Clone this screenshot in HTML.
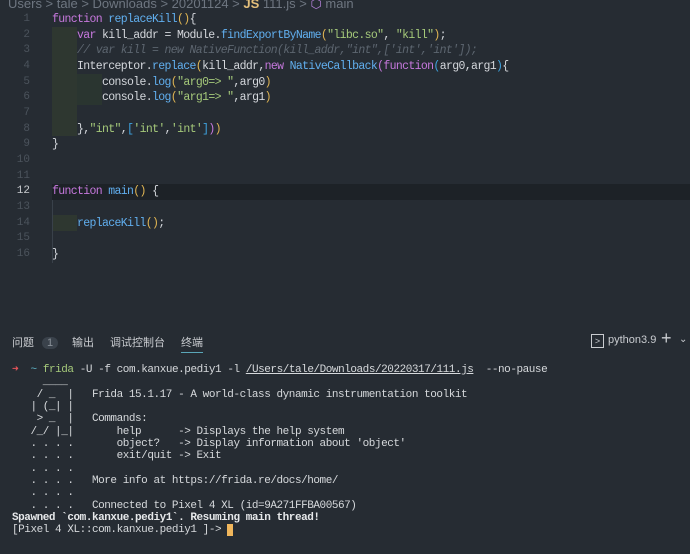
<!DOCTYPE html>
<html><head><meta charset="utf-8"><style>
body{margin:0;width:690px;height:554px;background:#262c33;overflow:hidden;position:relative;font-family:"Liberation Mono",monospace}
.bc{position:absolute;left:8px;top:-4px;font:13px "Liberation Sans",sans-serif;color:#6e7681;white-space:pre}
.ln{position:absolute;left:0;width:30px;text-align:right;font-size:11px;color:#4b535c;line-height:15.64px}
.cl{position:absolute;left:52px;font-size:11.5px;letter-spacing:-0.65px;color:#d4d7dc;white-space:pre;height:15.64px;line-height:15.64px}
.k{color:#c678dd}.f{color:#61afef}.s{color:#a5c97a}.y{color:#e0b553}.c{color:#5d6670;font-style:italic}.b{color:#3ea3e0}.p{color:#c678dd}
.g{position:absolute;background:#2e3730}
.term{position:absolute;left:12px;top:364px;font-size:11px;letter-spacing:-0.45px;line-height:12.35px;color:#d6d9dc;white-space:pre;margin:0;font-family:"Liberation Mono",monospace}
.tabs{position:absolute;top:334px;left:12px;font:11px "Liberation Sans","Noto Sans CJK SC",sans-serif;color:#c9ccd0}
</style></head><body>
<div class="bc">Users &gt; tale &gt; Downloads &gt; 20201124 &gt; <span style="color:#e5c07b;font-weight:bold">JS</span> 111.js &gt; <span style="color:#b180d7">⬡</span> main</div>

<div style="position:absolute;left:52px;top:184px;width:638px;height:16px;background:#1d2227"></div>
<div class="g" style="left:52px;top:27px;width:25px;height:109px"></div>
<div class="g" style="left:77px;top:74px;width:25px;height:31px;background:#2a3530"></div>
<div class="g" style="left:52px;top:215px;width:25px;height:16px"></div>
<div style="position:absolute;left:52px;top:200px;width:1px;height:63px;background:#39414a"></div>

<div class="ln" style="top:12px">1</div><div class="ln" style="top:28px">2</div><div class="ln" style="top:43px">3</div><div class="ln" style="top:59px">4</div><div class="ln" style="top:75px">5</div><div class="ln" style="top:90px">6</div><div class="ln" style="top:106px">7</div><div class="ln" style="top:122px">8</div><div class="ln" style="top:137px">9</div><div class="ln" style="top:153px">10</div><div class="ln" style="top:169px">11</div><div class="ln" style="top:184px;color:#c9ccd0">12</div><div class="ln" style="top:200px">13</div><div class="ln" style="top:216px">14</div><div class="ln" style="top:231px">15</div><div class="ln" style="top:247px">16</div>

<div class="cl" style="top:12px"><span class="k">function</span> <span class="f">replaceKill</span><span class="y">()</span>{</div>
<div class="cl" style="top:28px">    <span class="k">var</span> kill_addr = Module.<span class="f">findExportByName</span><span class="y">(</span><span class="s">"libc.so"</span>, <span class="s">"kill"</span><span class="y">)</span>;</div>
<div class="cl" style="top:43px">    <span class="c">// var kill = new NativeFunction(kill_addr,"int",['int','int']);</span></div>
<div class="cl" style="top:59px">    Interceptor.<span class="f">replace</span><span class="y">(</span>kill_addr,<span class="k">new</span> <span class="f">NativeCallback</span><span class="p">(</span><span class="k">function</span><span class="b">(</span>arg0,arg1<span class="b">)</span>{</div>
<div class="cl" style="top:75px">        console.<span class="f">log</span><span class="y">(</span><span class="s">"arg0=&gt; "</span>,arg0<span class="y">)</span></div>
<div class="cl" style="top:90px">        console.<span class="f">log</span><span class="y">(</span><span class="s">"arg1=&gt; "</span>,arg1<span class="y">)</span></div>
<div class="cl" style="top:122px">    },<span class="s">"int"</span>,<span class="b">[</span><span class="s">'int'</span>,<span class="s">'int'</span><span class="b">]</span><span class="p">)</span><span class="y">)</span></div>
<div class="cl" style="top:137px">}</div>
<div class="cl" style="top:184px"><span class="k">function</span> <span class="f">main</span><span class="y">()</span> {</div>
<div class="cl" style="top:216px">    <span class="f">replaceKill</span><span class="y">()</span>;</div>
<div class="cl" style="top:247px">}</div>

<div class="tabs"><span>问题</span><span style="display:inline-block;margin-left:8px;background:#3a424b;border-radius:8px;width:16px;text-align:center;color:#8a9199">1</span><span style="margin-left:14px">输出</span><span style="margin-left:16px">调试控制台</span><span style="margin-left:16px;border-bottom:1px solid #5aa6b8;padding-bottom:3px">终端</span></div>
<div style="position:absolute;left:591px;top:334px;width:11px;height:12px;border:1px solid #c9ccd0;font:9px sans-serif;color:#c9ccd0;text-align:center;line-height:12px">&gt;</div>
<div style="position:absolute;left:608px;top:334px;font:11px 'Liberation Sans',sans-serif;color:#c9ccd0">python3.9</div>
<div style="position:absolute;left:661px;top:328px;font:18px 'Liberation Sans',sans-serif;color:#c9ccd0">+</div>
<div style="position:absolute;left:679px;top:334px;font:10px 'Liberation Sans',sans-serif;color:#c9ccd0">⌄</div>

<pre class="term"><span style="color:#e8545a">➜</span>  <span style="color:#5fb3c6">~</span> <span style="color:#a5c97a">frida</span> -U -f com.kanxue.pediy1 -l <u>/Users/tale/Downloads/20220317/111.js</u>  --no-pause
     ____
    / _  |   Frida 15.1.17 - A world-class dynamic instrumentation toolkit
   | (_| |
    &gt; _  |   Commands:
   /_/ |_|       help      -&gt; Displays the help system
   . . . .       object?   -&gt; Display information about 'object'
   . . . .       exit/quit -&gt; Exit
   . . . .
   . . . .   More info at https://frida.re/docs/home/
   . . . .
   . . . .   Connected to Pixel 4 XL (id=9A271FFBA00567)
<b style="color:#e6e8ea">Spawned `com.kanxue.pediy1`. Resuming main thread!</b>
[Pixel 4 XL::com.kanxue.pediy1 ]-&gt; <span style="background:#f0b65c"> </span></pre>
</body></html>
